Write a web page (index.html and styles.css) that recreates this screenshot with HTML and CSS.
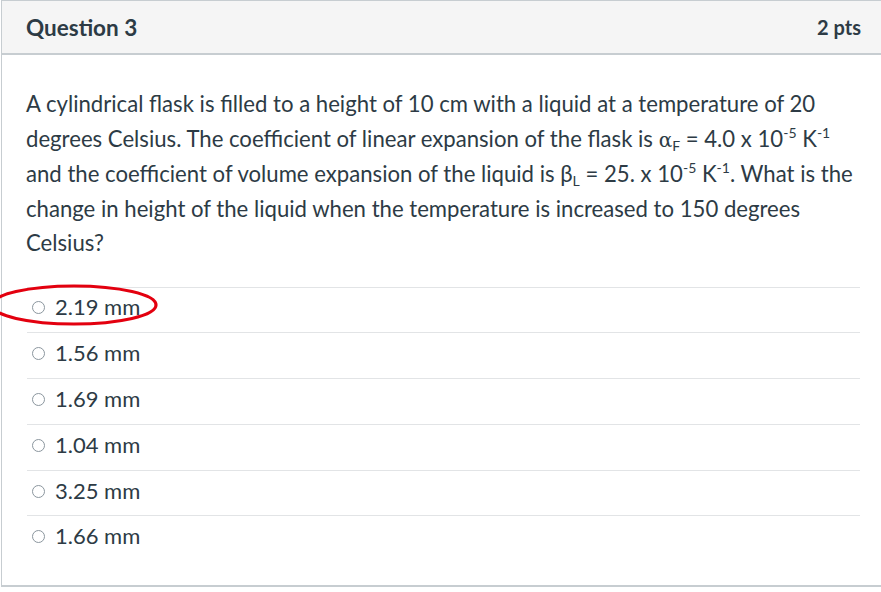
FILE: index.html
```html
<!DOCTYPE html>
<html>
<head>
<meta charset="utf-8">
<link rel="stylesheet" href="styles.css">
</head>
<body>
<div class="card">
  <div class="header">
    <span class="title">Question 3</span>
    <span class="pts">2 pts</span>
  </div>
  <div class="content">
    <p class="text">A cylindrical flask is filled to a height of 10 cm with a liquid at a temperature of 20 degrees Celsius. The coefficient of linear expansion of the flask is <span class="greek">α</span><sub>F</sub> = 4.0 x 10<sup>-5</sup> K<sup>-1</sup> and the coefficient of volume expansion of the liquid is β<sub>L</sub> = 25. x 10<sup>-5</sup> K<sup>-1</sup>. What is the change in height of the liquid when the temperature is increased to 150 degrees Celsius?</p>
    <div class="answers">
      <div class="answer"><span class="radio"></span><span class="label">2.19 mm</span></div>
      <div class="answer"><span class="radio"></span><span class="label">1.56 mm</span></div>
      <div class="answer"><span class="radio"></span><span class="label">1.69 mm</span></div>
      <div class="answer"><span class="radio"></span><span class="label">1.04 mm</span></div>
      <div class="answer"><span class="radio"></span><span class="label">3.25 mm</span></div>
      <div class="answer"><span class="radio"></span><span class="label">1.66 mm</span></div>
    </div>
  </div>
</div>
<svg class="mark" width="200" height="60" viewBox="0 0 200 60">
  <ellipse cx="82" cy="25" rx="82" ry="19" fill="none" stroke="#e3000f" stroke-width="3.2"/>
</svg>
</body>
</html>
```
FILE: styles.css
```css
html, body {
  margin: 0;
  padding: 0;
  background: #ffffff;
}
body {
  font-family: Lato, "Open Sans", sans-serif;
  color: #2d3b45;
  width: 881px;
  height: 592px;
  overflow: hidden;
  position: relative;
}
.card {
  margin-left: 1px;
  width: 884px;
  height: 587px;
  border: 1px solid #c7cdd1;
  border-bottom-width: 2px;
  box-sizing: border-box;
  display: flex;
  flex-direction: column;
}
.header {
  height: 54px;
  background: #f5f5f5;
  border-bottom: 2px solid #c7cdd1;
  box-sizing: border-box;
  display: flex;
  align-items: center;
  justify-content: space-between;
  padding: 0 22px 0 24px;
  width: 881px;
}
.title {
  font-weight: 700;
  font-size: 22.5px;
}
.pts {
  font-weight: 700;
  font-size: 20px;
  color: #2d3b45;
}
.content {
  padding: 32px 20px 0 24px;
  width: 880px;
  box-sizing: border-box;
}
.text {
  margin: 0;
  font-size: 22.15px;
  line-height: 34.5px;
}
.greek {
  font-family: "DejaVu Serif", serif;
  font-size: 20px;
}
sub, sup {
  font-size: 14px;
  line-height: 0;
  position: relative;
  vertical-align: baseline;
}
sub { top: 4px; }
sup { top: -9px; }
.answers {
  margin-top: 26px;
  margin-left: 1px;
  margin-right: 2px;
}
.answer {
  height: 45.8px;
  border-top: 1px solid #e2e4e6;
  box-sizing: border-box;
  display: flex;
  align-items: center;
  padding-left: 5px;
  padding-bottom: 6px;
}
.radio {
  width: 13px;
  height: 13px;
  border: 1px solid #8b969e;
  border-radius: 50%;
  box-sizing: border-box;
  margin-right: 10px;
  margin-top: 2px;
}
.label {
  font-size: 22px;
}
.mark {
  position: absolute;
  left: -8px;
  top: 280px;
}
```
